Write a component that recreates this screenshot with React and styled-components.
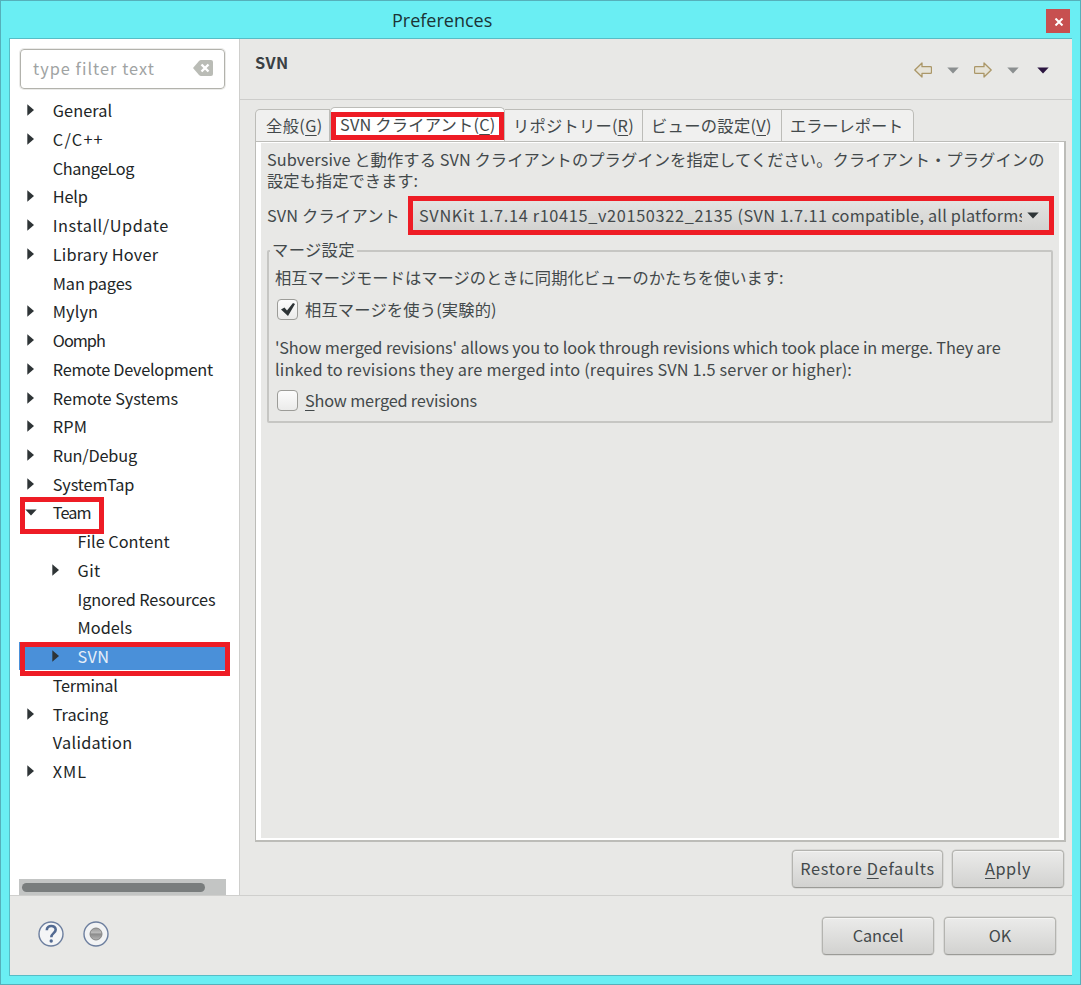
import React from 'react';
import styled, { createGlobalStyle, css } from 'styled-components';

const GlobalStyle = createGlobalStyle`
  * {
    box-sizing: border-box;
  }
  body {
    margin: 0;
    overflow: hidden;
  }
`;

const Window = styled.div`
  width: 1081px;
  height: 985px;
  display: flex;
  flex-direction: column;
  padding: 0 8px 8px;
  border: 1px solid #55b0ba;
  background: #6aeef3;
  font-family: 'Noto Sans CJK JP', 'Noto Sans', sans-serif;
  font-size: 16.3px;
  line-height: 22px;
  letter-spacing: 0.35px;
  color: #43494b;
  white-space: nowrap;
`;

const TitleBar = styled.header`
  height: 37px;
  flex: none;
  display: flex;
  justify-content: flex-end;
  padding: 8px 2px 0 0;
`;

const Title = styled.h1`
  flex: 1;
  margin: -1px 0 0 383px;
  font-family: 'Open Sans', 'Noto Sans', sans-serif;
  font-size: 18px;
  font-weight: 400;
  line-height: 24px;
  letter-spacing: 0;
  color: #1b3336;
`;

const CloseButton = styled.button`
  width: 24px;
  height: 24px;
  display: flex;
  align-items: center;
  justify-content: center;
  padding: 1px 0 0 1px;
  border: 0;
  background: #c75050;
`;

const Dialog = styled.div`
  flex: 1;
  display: grid;
  grid-template-columns: 230px 1fr;
  grid-template-rows: 856px 1fr;
  border: 1px solid #56bdc6;
  border-right: 0;
  background: #e8e8e6;
`;

const Sidebar = styled.aside`
  display: flex;
  flex-direction: column;
  padding: 10px 0 0 9px;
  border-right: 1px solid #cfcfcd;
  background: #fff;
`;

const Filter = styled.div`
  width: 205px;
  height: 40px;
  flex: none;
  display: flex;
  align-items: center;
  justify-content: space-between;
  margin-left: 1px;
  padding: 0 11px 2px 12px;
  border: 1.5px solid #b2b2ac;
  border-radius: 4px;
  box-shadow: 0 0 0 1px #ebebe9;
  letter-spacing: 1.04px;
  color: #a0a3a3;
`;

const Tree = styled.ul`
  flex: 1;
  margin: 6.8px 0 0;
  padding: 0;
  list-style: none;
  color: #212526;
`;

const TreeRow = styled.li`
  position: relative;
  width: 207px;
  height: 28.74px;
  display: flex;
  align-items: center;
  padding-left: ${(props) => (props.$nested ? 30.6 : 5.8)}px;
  letter-spacing: ${(props) => props.$spacing}px;
  ${(props) =>
    props.$selected &&
    css`
      background: #4a90d9;
      color: #e6eef8;
    `}
`;

const Twisty = styled.span`
  width: 28px;
  flex: none;
  display: flex;
`;

const Scrollbar = styled.div`
  width: 207px;
  height: 16px;
  flex: none;
  padding: 4px 21px 0 3px;
  background: #c3c5c4;
`;

const Thumb = styled.div`
  height: 9px;
  border-radius: 5px;
  background: #797d7d;
`;

// red marker drawn over the controls the reader has to touch
const Marker = styled.span`
  position: absolute;
  top: ${(props) => props.$top}px;
  left: ${(props) => props.$left}px;
  width: ${(props) => props.$width}px;
  height: ${(props) => props.$height}px;
  border: 5px solid #ee1c25;
  background: ${(props) => props.$fill || 'none'};
  background-clip: padding-box;
  pointer-events: none;
`;

const Page = styled.main`
  display: flex;
  flex-direction: column;
  min-width: 0;
`;

const PageHeader = styled.div`
  height: 61px;
  flex: none;
  display: flex;
  justify-content: space-between;
  padding: 12px 23px 0 15px;
  border-bottom: 1px solid #cdcdcb;
`;

const PageTitle = styled.h2`
  margin: 0;
  font-size: 16.3px;
  font-weight: 700;
  letter-spacing: 0.4px;
  color: #3a4043;
`;

const Nav = styled.div`
  height: 38px;
  display: flex;
  align-items: center;
  gap: 15px;
`;

const Menu = styled.span`
  display: flex;
  margin-left: 3px;
  padding-top: 1px;
`;

const Tabs = styled.div`
  height: 41px;
  flex: none;
  display: flex;
  align-items: flex-end;
  padding-left: 15px;
`;

const Tab = styled.div`
  position: relative;
  width: ${(props) => props.$width}px;
  height: ${(props) => (props.$active ? 34 : 32)}px;
  padding: ${(props) => (props.$active ? 5 : 4)}px 0 0 ${(props) => props.$pad}px;
  border: 1px solid #bcbcb8;
  border-left-width: ${(props) => (props.$first || props.$active ? 1 : 0)}px;
  border-bottom: 0;
  border-radius: ${(props) => (props.$first || props.$active ? 5 : 0)}px
    ${(props) => (props.$last || props.$active ? 5 : 0)}px 0 0;
  background: ${(props) => (props.$active ? '#fff' : '#f0f0ef')};
  letter-spacing: ${(props) => props.$spacing}px;
`;

const Panel = styled.section`
  height: 701px;
  flex: none;
  margin: 0 6px 0 15px;
  border: 1px solid #bcbcb8;
  border-width: 1px 2px 2px 1px;
  background: #fff;
  padding: 1px 5px 2px 5px;
`;

const PanelBody = styled.div`
  height: 100%;
  padding: 5px 6px 0 6px;
  background: #e8e8e6;
`;

const Line = styled.div`
  height: ${(props) => props.$height || 22}px;
  letter-spacing: ${(props) => props.$spacing || 0}px;
`;

const ClientRow = styled.div`
  display: flex;
  align-items: center;
  height: 39px;
  margin-top: 5px;
`;

const ClientLabel = styled.label`
  width: 141px;
  flex: none;
  padding-bottom: 2px;
  letter-spacing: 0.15px;
`;

const Combo = styled.div`
  position: relative;
  width: 645px;
  height: 39px;
  flex: none;
  display: flex;
  align-items: center;
  justify-content: space-between;
  padding: 0 14px 0 11px;
  background: linear-gradient(#e6e6e4, #d0d0ce);
`;

const ComboText = styled.span`
  width: 603px;
  padding-bottom: 2px;
  overflow: hidden;
`;

const Spaced = styled.span`
  letter-spacing: ${(props) => props.$spacing}px;
`;

const Group = styled.fieldset`
  height: 184px;
  margin: 4px 0 0;
  padding: 3px 6px 0 6px;
  border: 2px solid #c6c6c3;
  border-radius: 2px;
  min-width: 0;
`;

const Legend = styled.legend`
  height: 24px;
  padding: 0 2px;
  margin-left: -5px;
  line-height: 20px;
`;

const CheckRow = styled.label`
  display: flex;
  align-items: center;
  gap: 7px;
  height: 22px;
  margin-top: ${(props) => props.$top}px;
  padding-left: 2px;
  letter-spacing: ${(props) => props.$spacing}px;
`;

const Box = styled.span`
  width: 21px;
  height: 21px;
  display: flex;
  align-items: center;
  justify-content: center;
  border: 1px solid #9c9c98;
  border-radius: 4px;
  background: linear-gradient(#fcfcfc, #ebebea);
`;

const Actions = styled.div`
  display: flex;
  justify-content: flex-end;
  gap: 9px;
  padding: 8px 8px 0 0;
`;

const Button = styled.button`
  width: ${(props) => props.$width || 112}px;
  height: 38px;
  padding: 0 0 ${(props) => props.$lift || 2}px;
  border: 1px solid #b4b4b0;
  border-bottom-color: #9b9b97;
  border-radius: 4px;
  background: linear-gradient(#ebebea, #d2d2d0);
  box-shadow: inset 0 1px 0 #f4f4f3, 0 0 0 0.5px #c8c8c5;
  color: #43494b;
  font: inherit;
  letter-spacing: ${(props) => props.$spacing}px;
`;

const Footer = styled.footer`
  grid-column: 1 / 3;
  display: flex;
  justify-content: space-between;
  padding: 20px 16px 0 28px;
  border-top: 1px solid #cfcfcd;
`;

const FooterGroup = styled.div`
  display: flex;
  align-items: flex-start;
  gap: ${(props) => props.$gap}px;
  padding-top: ${(props) => props.$top || 0}px;
`;

const Mnemonic = styled.u`
  text-decoration-thickness: 1px;
  text-underline-offset: 3px;
`;

const RightTriangle = () => (
  <svg width="9" height="12" viewBox="0 0 9 12">
    <path d="M2.300 0.300 9 6l-6.700 5.700z" fill="#2e3436" />
  </svg>
);

const DownTriangle = ({ color = '#2e3436' }) => (
  <svg width="12" height="7" viewBox="0 0 12 7">
    <path d="M0.300 0.500h11.400L6 6.500z" fill={color} />
  </svg>
);

const ClearIcon = () => (
  <svg width="20" height="16" viewBox="0 0 20 16">
    <path d="M0 8 6 1q1-1 2-1h10q2 0 2 2v12q0 2-2 2H8q-1 0-2-1z" fill="#babcb6" />
    <path d="m8.500 4.500 7 7m0-7-7 7" stroke="#fff" strokeWidth="2.400" />
  </svg>
);

const NavArrow = ({ flip }) => (
  <svg width="18" height="16" viewBox="0 0 18 16">
    <path
      d="M.8 8 8 1v3.700h8.500q1 0 1 1v4.600q0 1-1 1H8V15z"
      fill="#e6e3d8"
      stroke="#ab9768"
      strokeWidth="1.300"
      strokeLinejoin="round"
      transform={flip ? 'matrix(-1 0 0 1 18 0)' : undefined}
    />
  </svg>
);

const HelpIcon = () => (
  <svg width="26" height="26" viewBox="0 0 26 26">
    <circle cx="13" cy="13" r="12" fill="#f4f5f6" stroke="#6d7f9f" strokeWidth="1.400" />
    <path
      d="M8.800 9.200C8.800 3.500 17.700 3.800 17.700 8.700c0 3.300-4.400 3.600-4.400 7.500"
      fill="none"
      stroke="#526a92"
      strokeWidth="2.600"
    />
    <circle cx="13.200" cy="20" r="1.700" fill="#526a92" />
  </svg>
);

const RecordIcon = () => (
  <svg width="26" height="26" viewBox="0 0 26 26">
    <defs>
      <linearGradient id="record" x2="0" y2="1">
        <stop offset="0" stopColor="#999" />
        <stop offset=".4" stopColor="#bbb" />
        <stop offset=".5" stopColor="#8b8b8b" />
        <stop offset="1" stopColor="#b5b5b5" />
      </linearGradient>
    </defs>
    <circle cx="13" cy="13" r="12" fill="#f2f3f4" stroke="#6d7f9f" strokeWidth="1.400" />
    <circle cx="13" cy="13" r="6" fill="url(#record)" stroke="#858585" />
  </svg>
);

const rows = [
  { label: 'General', closed: true, spacing: 0.06 },
  { label: 'C/C++', closed: true, spacing: 1.2 },
  { label: 'ChangeLog', spacing: -0.43 },
  { label: 'Help', closed: true, spacing: -0.15 },
  { label: 'Install/Update', closed: true, spacing: 0.55 },
  { label: 'Library Hover', closed: true, spacing: 0.2 },
  { label: 'Man pages', spacing: -0.15 },
  { label: 'Mylyn', closed: true, spacing: 0.1 },
  { label: 'Oomph', closed: true, spacing: -1 },
  { label: 'Remote Development', closed: true, spacing: -0.27 },
  { label: 'Remote Systems', closed: true, spacing: 0 },
  { label: 'RPM', closed: true, spacing: 0.1 },
  { label: 'Run/Debug', closed: true, spacing: -0.2 },
  { label: 'SystemTap', closed: true, spacing: -0.15 },
  {
    label: 'Team',
    open: true,
    spacing: -0.9,
    marker: { $top: -1.2, $left: 1, $width: 84, $height: 37 },
  },
  { label: 'File Content', nested: true, spacing: 0 },
  { label: 'Git', nested: true, closed: true, spacing: 0.35 },
  { label: 'Ignored Resources', nested: true, spacing: -0.12 },
  { label: 'Models', nested: true, spacing: 0 },
  {
    label: 'SVN',
    nested: true,
    closed: true,
    selected: true,
    spacing: 0.3,
    marker: { $top: -0.2, $left: 1, $width: 210, $height: 34 },
  },
  { label: 'Terminal', spacing: -0.3 },
  { label: 'Tracing', closed: true, spacing: -0.08 },
  { label: 'Validation', spacing: 0.3 },
  { label: 'XML', closed: true, spacing: 0.9 },
];

const App = () => (
  <>
    <GlobalStyle />
    <Window>
      <TitleBar>
        <Title>Preferences</Title>
        <CloseButton>
          <svg width="10" height="8" viewBox="0 0 10 8">
            <path d="m1.500.5 7 7m0-7-7 7" stroke="#fff" strokeWidth="2" />
          </svg>
        </CloseButton>
      </TitleBar>
      <Dialog>
        <Sidebar>
          <Filter>
            type filter text
            <ClearIcon />
          </Filter>
          <Tree>
            {rows.map((row) => (
              <TreeRow
                key={row.label}
                $nested={row.nested}
                $selected={row.selected}
                $spacing={row.spacing}
              >
                <Twisty>
                  {row.closed && <RightTriangle />}
                  {row.open && <DownTriangle />}
                </Twisty>
                {row.label}
                {row.marker && <Marker {...row.marker} />}
              </TreeRow>
            ))}
          </Tree>
          <Scrollbar>
            <Thumb />
          </Scrollbar>
        </Sidebar>
        <Page>
          <PageHeader>
            <PageTitle>SVN</PageTitle>
            <Nav>
              <NavArrow />
              <DownTriangle color="#8b8f90" />
              <NavArrow flip />
              <DownTriangle color="#8b8f90" />
              <Menu>
                <DownTriangle color="#2b1540" />
              </Menu>
            </Nav>
          </PageHeader>
          <Tabs>
            <Tab $width={75} $pad={10} $first>
              全般(<Mnemonic>G</Mnemonic>)
            </Tab>
            <Tab $width={175} $pad={9} $spacing={0.2} $active>
              SVN クライアント(<Mnemonic>C</Mnemonic>)
              <Marker $top={4} $left={0} $width={173} $height={28} />
            </Tab>
            <Tab $width={138} $pad={8} $spacing={0.2}>
              リポジトリー(<Mnemonic>R</Mnemonic>)
            </Tab>
            <Tab $width={139} $pad={8} $spacing={0.3}>
              ビューの設定(<Mnemonic>V</Mnemonic>)
            </Tab>
            <Tab $width={132} $pad={8} $spacing={-0.1} $last>
              エラーレポート
            </Tab>
          </Tabs>
          <Panel>
            <PanelBody>
              <Line $spacing={0.07} $height={21}>
                Subversive と動作する SVN クライアントのプラグインを指定してください。クライアント・プラグインの
              </Line>
              <Line>設定も指定できます:</Line>
              <ClientRow>
                <ClientLabel>SVN クライアント</ClientLabel>
                <Combo>
                  <ComboText>
                    <Spaced $spacing={0.66}>SVNKit 1.7.14 r10415_v20150322_2135 </Spaced>
                    <Spaced $spacing={0.43}>(SVN 1.7.11 </Spaced>
                    <Spaced $spacing={0.2}>compatible, all platforms)</Spaced>
                  </ComboText>
                  <DownTriangle />
                  <Marker $top={0} $left={0} $width={646} $height={39} />
                </Combo>
              </ClientRow>
              <Group>
                <Legend>マージ設定</Legend>
                <Line>相互マージモードはマージのときに同期化ビューのかたちを使います:</Line>
                <CheckRow $top={10} $spacing={0.15}>
                  <Box>
                    <svg width="17" height="15" viewBox="0 0 17 15">
                      <path d="m2 7.500 3.500-2L8 8.500 14 1l2 1-7 12z" fill="#2e3436" />
                    </svg>
                  </Box>
                  相互マージを使う(実験的)
                </CheckRow>
                <Line $height={16} />
                <Line $spacing={-0.115}>
                  'Show merged revisions' allows you to look through revisions which took place in merge. They are
                </Line>
                <Line $spacing={0.17}>
                  linked to revisions they are merged into (requires SVN 1.5 server or higher):
                </Line>
                <CheckRow $top={9} $spacing={-0.18}>
                  <Box />
                  <span>
                    <Mnemonic>S</Mnemonic>how merged revisions
                  </span>
                </CheckRow>
              </Group>
            </PanelBody>
          </Panel>
          <Actions>
            <Button $width={151} $spacing={0.7} $lift={3}>
              Restore <Mnemonic>D</Mnemonic>efaults
            </Button>
            <Button $spacing={0.55} $lift={3}>
              <Mnemonic>A</Mnemonic>pply
            </Button>
          </Actions>
        </Page>
        <Footer>
          <FooterGroup $gap={19} $top={5}>
            <HelpIcon />
            <RecordIcon />
          </FooterGroup>
          <FooterGroup $gap={10} $top={1}>
            <Button $spacing={-0.1}>Cancel</Button>
            <Button $spacing={0}>OK</Button>
          </FooterGroup>
        </Footer>
      </Dialog>
    </Window>
  </>
);

export default App;
